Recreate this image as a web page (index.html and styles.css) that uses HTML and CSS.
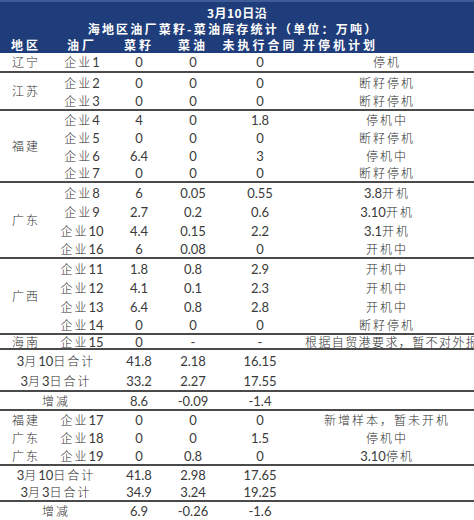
FILE: index.html
```html
<!DOCTYPE html>
<html lang="zh">
<head>
<meta charset="utf-8">
<link rel="stylesheet" href="styles.css">
</head>
<body>
<table class="sheet">
  <colgroup>
    <col class="c1"><col class="c2"><col class="c3"><col class="c4"><col class="c5"><col class="c6">
  </colgroup>
  <thead>
    <tr class="h1"><th colspan="6" class="title">3月10日沿</th></tr>
    <tr class="h2"><th colspan="6" class="title">海地区油厂菜籽-菜油库存统计（单位：万吨）</th></tr>
    <tr class="h3"><th>地区</th><th>油厂</th><th>菜籽</th><th>菜油</th><th>未执行合同</th><th class="plan-h">开停机计划</th></tr>
  </thead>
  <tbody>
    <tr class="r20 end"><td class="zh">辽宁</td><td class="zh">企业<span class="n">1</span></td><td>0</td><td>0</td><td>0</td><td class="zh">停机</td></tr>

    <tr class="r19"><td class="zh" rowspan="2">江苏</td><td class="zh">企业<span class="n">2</span></td><td>0</td><td>0</td><td>0</td><td class="zh">断籽停机</td></tr>
    <tr class="r19 end"><td class="zh">企业<span class="n">3</span></td><td>0</td><td>0</td><td>0</td><td class="zh">断籽停机</td></tr>

    <tr class="r18"><td class="zh rg" rowspan="4">福建</td><td class="zh">企业<span class="n">4</span></td><td>4</td><td>0</td><td>1.8</td><td class="zh">停机中</td></tr>
    <tr class="r18"><td class="zh">企业<span class="n">5</span></td><td>0</td><td>0</td><td>0</td><td class="zh">断籽停机</td></tr>
    <tr class="r18"><td class="zh">企业<span class="n">6</span></td><td>6.4</td><td>0</td><td>3</td><td class="zh">停机中</td></tr>
    <tr class="r18 end"><td class="zh">企业<span class="n">7</span></td><td>0</td><td>0</td><td>0</td><td class="zh">断籽停机</td></tr>

    <tr class="r19"><td class="zh" rowspan="4">广东</td><td class="zh">企业<span class="n">8</span></td><td>6</td><td>0.05</td><td>0.55</td><td class="zh"><span class="n">3.8</span>开机</td></tr>
    <tr class="r19"><td class="zh">企业<span class="n">9</span></td><td>2.7</td><td>0.2</td><td>0.6</td><td class="zh"><span class="n">3.10</span>开机</td></tr>
    <tr class="r19"><td class="zh">企业<span class="n">10</span></td><td>4.4</td><td>0.15</td><td>2.2</td><td class="zh"><span class="n">3.1</span>开机</td></tr>
    <tr class="r19 end"><td class="zh">企业<span class="n">16</span></td><td>6</td><td>0.08</td><td>0</td><td class="zh">开机中</td></tr>

    <tr class="r19"><td class="zh" rowspan="4">广西</td><td class="zh">企业<span class="n">11</span></td><td>1.8</td><td>0.8</td><td>2.9</td><td class="zh">开机中</td></tr>
    <tr class="r19"><td class="zh">企业<span class="n">12</span></td><td>4.1</td><td>0.1</td><td>2.3</td><td class="zh">开机中</td></tr>
    <tr class="r19"><td class="zh">企业<span class="n">13</span></td><td>6.4</td><td>0.8</td><td>2.8</td><td class="zh">开机中</td></tr>
    <tr class="r19 end"><td class="zh">企业<span class="n">14</span></td><td>0</td><td>0</td><td>0</td><td class="zh">断籽停机</td></tr>

    <tr class="r15 end"><td class="zh">海南</td><td class="zh">企业<span class="n">15</span></td><td>0</td><td>-</td><td>-</td><td class="zh note">根据自贸港要求，暂不对外报</td></tr>

    <tr class="r21"><td colspan="2" class="zh"><span class="n">3</span>月<span class="n">10</span>日合计</td><td>41.8</td><td>2.18</td><td>16.15</td><td></td></tr>
    <tr class="r21 end"><td colspan="2" class="zh"><span class="n">3</span>月<span class="n">3</span>日合计</td><td>33.2</td><td>2.27</td><td>17.55</td><td></td></tr>
    <tr class="r19 end"><td colspan="2" class="zh">增减</td><td>8.6</td><td>-0.09</td><td>-1.4</td><td></td></tr>

    <tr class="r18"><td class="zh">福建</td><td class="zh">企业<span class="n">17</span></td><td>0</td><td>0</td><td>0</td><td class="zh">新增样本，暂未开机</td></tr>
    <tr class="r18"><td class="zh">广东</td><td class="zh">企业<span class="n">18</span></td><td>0</td><td>0</td><td>1.5</td><td class="zh">停机中</td></tr>
    <tr class="r19 end"><td class="zh">广东</td><td class="zh">企业<span class="n">19</span></td><td>0</td><td>0.8</td><td>0</td><td class="zh"><span class="n">3.10</span>停机</td></tr>

    <tr class="r18"><td colspan="2" class="zh"><span class="n">3</span>月<span class="n">10</span>日合计</td><td>41.8</td><td>2.98</td><td>17.65</td><td></td></tr>
    <tr class="r18 end"><td colspan="2" class="zh"><span class="n">3</span>月<span class="n">3</span>日合计</td><td>34.9</td><td>3.24</td><td>19.25</td><td></td></tr>
    <tr class="r17"><td colspan="2" class="zh">增减</td><td>6.9</td><td>-0.26</td><td>-1.6</td><td></td></tr>
  </tbody>
</table>
</body>
</html>
```
FILE: styles.css
```css
html, body {
  margin: 0;
  padding: 0;
  background: #ffffff;
}

.sheet {
  width: 474px;
  table-layout: fixed;
  border-collapse: separate;
  border-spacing: 0;
  font-family: "Lato", "Noto Sans CJK SC", sans-serif;
  font-size: 13px;
  color: #3a3a3a;
}

.c1 { width: 52px; }
.c2 { width: 60px; }
.c3 { width: 54px; }
.c4 { width: 54px; }
.c5 { width: 80px; }
.c6 { width: 174px; }

thead th {
  background: #1f3d7a;
  color: #ffffff;
  font-family: "Noto Sans CJK SC", sans-serif;
  font-weight: 700;
  font-size: 12px;
  letter-spacing: 1.5px;
  padding: 0;
  line-height: 14px;
  text-align: center;
  white-space: nowrap;
}

thead .h1 th {
  border-top: 2px solid #3e5d98;
  height: 16px;
  vertical-align: middle;
  padding-top: 3px;
  letter-spacing: 0.5px;
}
thead .h2 th { height: 16px; padding-right: 8px; letter-spacing: 2.2px; }
thead .h3 th { height: 16px; letter-spacing: 3px; }
thead .h3 .plan-h { text-align: left; padding-left: 3px; }

tbody td {
  padding: 0;
  text-align: center;
  vertical-align: middle;
  line-height: 14px;
  white-space: nowrap;
}

.zh {
  font-family: "Noto Sans CJK SC", sans-serif;
  font-size: 12px;
  letter-spacing: 2px;
  color: #2e2e2e;
  font-weight: 300;
}

.zh .n {
  font-family: "Lato", sans-serif;
  font-size: 13px;
  letter-spacing: 0;
  color: #3a3a3a;
  font-weight: 400;
}

.note {
  text-align: left;
  padding-left: 5px;
  letter-spacing: 1.4px;
  overflow: hidden;
}

.r15 { height: 15px; }
.r15 td { line-height: 12px; }
.r17 { height: 17px; }
.r18 { height: 18px; }
.r19 { height: 19px; }
.r20 { height: 20px; }
.r21 { height: 21px; }

.end td,
td[rowspan] {
  border-bottom: 2px solid #4a4a4a;
}
```
